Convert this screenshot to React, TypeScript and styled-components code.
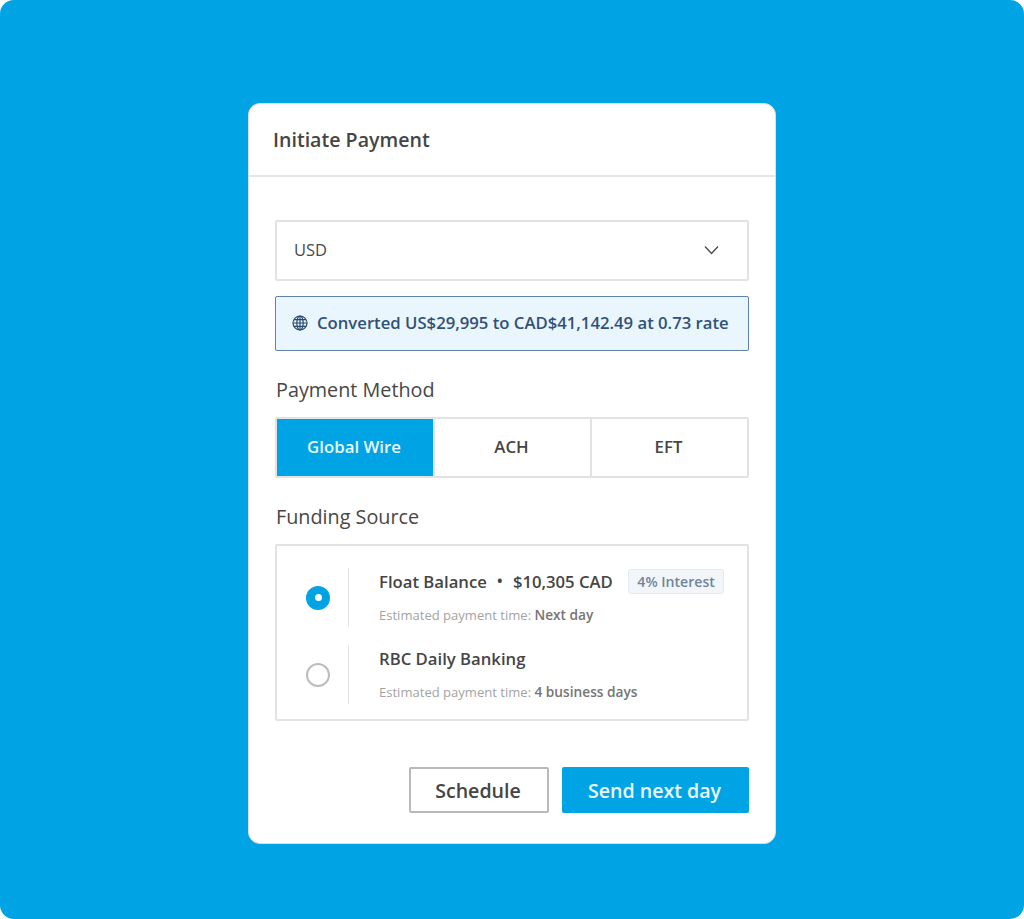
import React from "react";
import styled, { createGlobalStyle } from "styled-components";

const GlobalStyle = createGlobalStyle`
  html, body {
    margin: 0;
    padding: 0;
    background: #fff;
  }
  * {
    box-sizing: border-box;
  }
`;

const Page = styled.div`
  width: 1024px;
  height: 919px;
  background: #00a4e4;
  border-radius: 14px;
  padding-top: 103px;
  display: flex;
  justify-content: center;
  font-family: "Open Sans", "Noto Sans", sans-serif;
  color: #3c3c3c;
`;

const Card = styled.div`
  width: 528px;
  height: 741px;
  background: #fff;
  border: 1px solid #dcdfe2;
  border-radius: 12px;
  display: flex;
  flex-direction: column;
`;

const Header = styled.div`
  height: 73px;
  padding: 0 24px;
  display: flex;
  align-items: center;
  border-bottom: 2px solid #e6e6e6;
  font-size: 19.6px;
  font-weight: 600;
  color: #454545;
`;

const Body = styled.div`
  padding: 43px 26px 0;
  display: flex;
  flex-direction: column;
`;

const Select = styled.div`
  height: 61px;
  border: 2px solid #e2e2e2;
  border-radius: 2px;
  padding: 0 28px 2px 17px;
  display: flex;
  align-items: center;
  justify-content: space-between;
  font-size: 16.5px;
  color: #4a4a4a;
`;

const Notice = styled.div`
  margin-top: 15px;
  height: 55px;
  background: #e9f6fd;
  border: 1px solid #5f83ab;
  border-radius: 2px;
  padding: 0 0 2px 16px;
  display: flex;
  align-items: center;
  gap: 9px;
  font-size: 16.7px;
  font-weight: 600;
  color: #315179;
  white-space: nowrap;
`;

const SectionLabel = styled.div<{ $top: number }>`
  margin-top: ${(p) => p.$top}px;
  height: 28px;
  line-height: 28px;
  padding-left: 1px;
  font-size: 19.8px;
  color: #474747;
`;

const Tabs = styled.div`
  margin-top: 13px;
  height: 61px;
  border: 2px solid #e2e2e2;
  border-radius: 2px;
  display: grid;
  grid-template-columns: 156px 157px 1fr;
`;

const Tab = styled.div<{ $active?: boolean }>`
  display: flex;
  align-items: center;
  justify-content: center;
  padding: 0 2px 3px 0;
  font-size: 16.8px;
  font-weight: 600;
  background: ${(p) => (p.$active ? "#00a4e4" : "#fff")};
  color: ${(p) => (p.$active ? "#eaf8fe" : "#454545")};
  & + & {
    border-left: ${(p) => (p.$active ? "0" : "2px solid #e2e2e2")};
  }
`;

const Panel = styled.div`
  margin-top: 13px;
  height: 177px;
  border: 2px solid #e2e2e2;
  border-radius: 2px;
  padding: 22px 0 0 28px;
  display: flex;
  flex-direction: column;
  gap: 18px;
`;

const Source = styled.div`
  height: 59px;
  display: flex;
  align-items: center;
`;

const RadioSlot = styled.div`
  width: 43px;
  height: 100%;
  display: flex;
  align-items: center;
  flex: none;
`;

const Radio = styled.div<{ $checked?: boolean }>`
  width: 24px;
  height: 24px;
  margin-left: 1px;
  border-radius: 50%;
  display: flex;
  align-items: center;
  justify-content: center;
  background: ${(p) => (p.$checked ? "#00a4e4" : "#fff")};
  border: ${(p) => (p.$checked ? "0" : "2px solid #bdbdbd")};
`;

const RadioDot = styled.div`
  width: 7px;
  height: 7px;
  border-radius: 50%;
  background: #fff;
`;

const SourceInfo = styled.div`
  height: 100%;
  flex: 1;
  border-left: 1px solid #e4e4e4;
  padding-left: 30px;
  display: flex;
  flex-direction: column;
`;

const SourceTitle = styled.div`
  height: 28px;
  padding-bottom: 2px;
  display: flex;
  align-items: center;
  font-size: 16.7px;
  font-weight: 600;
  color: #454545;
  white-space: nowrap;
`;

const Bullet = styled.span`
  margin: 0 10px;
  font-size: 16px;
`;

const Badge = styled.span`
  margin-left: 15px;
  height: 25px;
  padding: 0 8.5px;
  display: flex;
  align-items: center;
  background: #f2f6fa;
  border: 1px solid #e2e9f1;
  border-radius: 3px;
  font-size: 14.1px;
  font-weight: 600;
  color: #70849d;
`;

const SourceMeta = styled.div`
  margin-top: 10px;
  font-size: 13.05px;
  line-height: 18px;
  color: #a3a3a3;
  white-space: nowrap;

  b {
    font-size: 13.7px;
    font-weight: 600;
    color: #757575;
  }
`;

const Actions = styled.div`
  margin-top: 46px;
  display: flex;
  justify-content: flex-end;
  gap: 13px;
`;

const Button = styled.div<{ $primary?: boolean }>`
  height: 46px;
  padding-right: 2px;
  border-radius: 2px;
  display: flex;
  align-items: center;
  justify-content: center;
  font-size: 19.6px;
  font-weight: 600;
  width: ${(p) => (p.$primary ? "187px" : "140px")};
  background: ${(p) => (p.$primary ? "#00a4e4" : "#fff")};
  color: ${(p) => (p.$primary ? "#eaf8fe" : "#454545")};
  border: ${(p) => (p.$primary ? "0" : "2px solid #b9b9b9")};
`;

const ChevronIcon = () => (
  <svg width="15" height="10" viewBox="0 0 15 10" fill="none">
    <path d="M1 1.5 7.5 8.5 14 1.5" stroke="#4a4a4a" strokeWidth="1.3" />
  </svg>
);

const GlobeIcon = () => (
  <svg width="16" height="16" viewBox="0 0 16 16" fill="none" stroke="#2a4a72" strokeWidth="1.2">
    <circle cx="8" cy="8" r="7" />
    <ellipse cx="8" cy="8" rx="3.2" ry="7" />
    <path d="M1 8h14M2 4.6h12M2 11.4h12M8 1v14" />
  </svg>
);

export default function App() {
  return (
    <>
      <GlobalStyle />
      <Page>
        <Card>
          <Header>Initiate Payment</Header>
          <Body>
            <Select>
              USD
              <ChevronIcon />
            </Select>
            <Notice>
              <GlobeIcon />
              Converted US$29,995 to CAD$41,142.49 at 0.73 rate
            </Notice>
            <SectionLabel $top={25}>Payment Method</SectionLabel>
            <Tabs>
              <Tab $active>Global Wire</Tab>
              <Tab>ACH</Tab>
              <Tab>EFT</Tab>
            </Tabs>
            <SectionLabel $top={25}>Funding Source</SectionLabel>
            <Panel>
              <Source>
                <RadioSlot>
                  <Radio $checked>
                    <RadioDot />
                  </Radio>
                </RadioSlot>
                <SourceInfo>
                  <SourceTitle>
                    Float Balance<Bullet>•</Bullet>$10,305 CAD
                    <Badge>4% Interest</Badge>
                  </SourceTitle>
                  <SourceMeta>
                    Estimated payment time: <b>Next day</b>
                  </SourceMeta>
                </SourceInfo>
              </Source>
              <Source>
                <RadioSlot>
                  <Radio />
                </RadioSlot>
                <SourceInfo>
                  <SourceTitle>RBC Daily Banking</SourceTitle>
                  <SourceMeta>
                    Estimated payment time: <b>4 business days</b>
                  </SourceMeta>
                </SourceInfo>
              </Source>
            </Panel>
            <Actions>
              <Button>Schedule</Button>
              <Button $primary>Send next day</Button>
            </Actions>
          </Body>
        </Card>
      </Page>
    </>
  );
}
